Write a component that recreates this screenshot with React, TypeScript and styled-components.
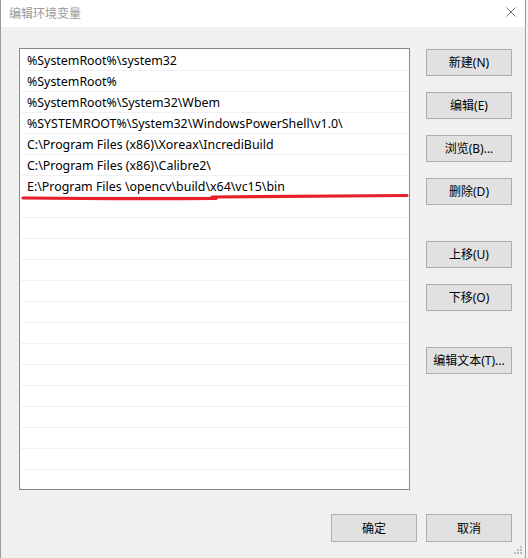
import styled, { createGlobalStyle } from "styled-components"

const GlobalStyle = createGlobalStyle`
  html, body {
    margin: 0;
    padding: 0;
    background: #f4f4f4;
  }
  body {
    font-family: "Noto Sans", "Noto Sans CJK SC", sans-serif;
    font-size: 12px;
  }
`

const Window = styled.div`
  width: 524px;
  height: 558px;
  border-left: 1px solid #9c9c9c;
  border-right: 1px solid #9c9c9c;
  background: #f0f0f0;
  display: flex;
  flex-direction: column;
  overflow: hidden;
`

const TitleBar = styled.header`
  height: 27px;
  flex: none;
  background: #ffffff;
  display: flex;
  align-items: center;
  justify-content: space-between;
  padding-left: 8px;
  padding-right: 9px;
`

const Title = styled.span`
  color: #9a9a9a;
  font-family: "Noto Sans CJK SC", sans-serif;
  font-size: 12px;
  line-height: 1;
  margin-top: -2px;
`

const Close = styled.span`
  width: 10px;
  height: 10px;
  display: flex;
  margin-top: -3px;
`

const Content = styled.section`
  display: flex;
  gap: 16px;
  padding-left: 18px;
  padding-top: 21px;
`

const List = styled.div`
  position: relative;
  width: 387px;
  height: 439px;
  border: 1px solid #828790;
  background: #ffffff;
  padding: 1px 1px 0;
  overflow: hidden;
  box-sizing: content-box;
`

const Row = styled.div`
  height: 20px;
  border-bottom: 1px solid #f0f0f0;
  padding-left: 6px;
  display: flex;
  align-items: center;
  color: #000000;
  font-size: 12.4px;
  white-space: nowrap;
`

const Mark = styled.svg`
  position: absolute;
  left: 0;
  top: 0;
  pointer-events: none;
`

const Side = styled.div`
  display: flex;
  flex-direction: column;
  gap: 16px;
  padding-top: 1px;
`

const Button = styled.button<{ $spaced?: boolean }>`
  width: 86px;
  height: 27px;
  margin-top: ${(p) => (p.$spaced ? "20px" : "0")};
  background: #e1e1e1;
  border: 1px solid #adadad;
  border-radius: 0;
  padding: 0 0 1px;
  color: #000000;
  font-family: "Noto Sans", "Noto Sans CJK SC", sans-serif;
  font-size: 12px;
  display: flex;
  align-items: center;
  justify-content: center;
`

const Footer = styled.footer`
  position: relative;
  display: flex;
  justify-content: flex-end;
  gap: 9px;
  padding-right: 13px;
  margin-top: 24px;
`

const WideButton = styled(Button)`
  height: 28px;
`

const Grip = styled.svg`
  position: absolute;
  right: 3px;
  top: 32px;
`

const paths = [
  "%SystemRoot%\\system32",
  "%SystemRoot%",
  "%SystemRoot%\\System32\\Wbem",
  "%SYSTEMROOT%\\System32\\WindowsPowerShell\\v1.0\\",
  "C:\\Program Files (x86)\\Xoreax\\IncrediBuild",
  "C:\\Program Files (x86)\\Calibre2\\",
  "E:\\Program Files \\opencv\\build\\x64\\vc15\\bin",
]

const rows = [...paths, ...Array(14).fill("")]

export default function App() {
  return (
    <>
      <GlobalStyle />
      <Window>
        <TitleBar>
          <Title>编辑环境变量</Title>
          <Close>
            <svg width="10" height="10" viewBox="0 0 10 10">
              <path d="M0.5 0.5 L9.5 9.5 M9.5 0.5 L0.5 9.5" stroke="#777" strokeWidth="1" fill="none" />
            </svg>
          </Close>
        </TitleBar>

        <Content>
          <List>
            {rows.map((text, i) => (
              <Row key={i}>{text}</Row>
            ))}
            <Mark width="391" height="200">
              <path d="M3 149 Q90 150 196 149.5" stroke="#e8202a" strokeWidth="3.2" fill="none" strokeLinecap="round" />
              <path d="M192 148 Q300 147 387 146.5" stroke="#e8202a" strokeWidth="3.2" fill="none" strokeLinecap="round" />
            </Mark>
          </List>

          <Side>
            <Button>新建(N)</Button>
            <Button>编辑(E)</Button>
            <Button>浏览(B)...</Button>
            <Button>删除(D)</Button>
            <Button $spaced>上移(U)</Button>
            <Button>下移(O)</Button>
            <Button $spaced>编辑文本(T)...</Button>
          </Side>
        </Content>

        <Footer>
          <WideButton>确定</WideButton>
          <WideButton>取消</WideButton>
          <Grip width="8" height="8" viewBox="0 0 8 8">
            <g fill="#bdbdbd">
              <rect x="6" y="0" width="2" height="2" />
              <rect x="3" y="3" width="2" height="2" />
              <rect x="6" y="3" width="2" height="2" />
              <rect x="0" y="6" width="2" height="2" />
              <rect x="3" y="6" width="2" height="2" />
              <rect x="6" y="6" width="2" height="2" />
            </g>
          </Grip>
        </Footer>
      </Window>
    </>
  )
}
